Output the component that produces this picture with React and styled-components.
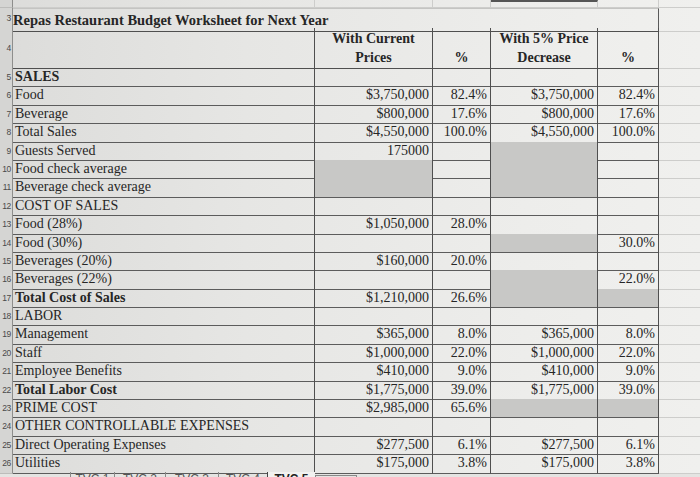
import React from 'react';
import styled, { createGlobalStyle } from 'styled-components';

const GlobalStyle = createGlobalStyle`
  html, body {
    margin: 0;
    padding: 0;
    overflow: hidden;
    background: linear-gradient(to right, #dcdcda 0%, #e6e6e4 35%, #ededeb 75%, #f0f0ee 100%);
    font-family: "Liberation Serif", "Times New Roman", serif;
    color: #262626;
  }
`;

const COLS = '13px 302px 118px 58px 107px 61px 60px 60px';

const Sheet = styled.div`
  width: 720px;
`;

const Row = styled.div`
  display: grid;
  grid-template-columns: ${COLS};
  height: ${(p) => p.$h}px;
  font-size: 14px;
  line-height: ${(p) => p.$h}px;
`;

const RowNum = styled.div`
  background: #d5d5d3;
  border-right: 1px solid #8e8e8c;
  border-bottom: 1px solid #bcbcba;
  font-family: "Liberation Sans", Arial, sans-serif;
  font-size: 8.5px;
  letter-spacing: -0.3px;
  color: #4a4a4a;
  text-align: right;
  padding-right: 1px;
  white-space: nowrap;
`;

const Cell = styled.div`
  border-right: 1px solid ${(p) => (p.$light ? '#cdcdcb' : '#4f4f4f')};
  border-bottom: 1px solid ${(p) => (p.$light ? '#cdcdcb' : '#5c5c5c')};
  border-top: ${(p) => (p.$topMark ? '2px solid #555' : 'none')};
  background: ${(p) => (p.$fill ? '#c8c8c6' : 'transparent')};
  text-align: ${(p) => p.$align || 'left'};
  font-weight: ${(p) => (p.$bold ? 700 : 400)};
  padding: 0 3px 0 2px;
  white-space: nowrap;
  box-sizing: border-box;
`;

const TitleCell = styled.div`
  grid-column: 2 / 7;
  border-right: 1px solid #5a5a5a;
  border-bottom: 1px solid #4f4f4f;
  border-top: 1px solid #c4c4c2;
  font-size: 14.5px;
  font-weight: 700;
  line-height: 22px;
  white-space: nowrap;
`;

const HeadCell = styled.div`
  border-right: 1px solid #4f4f4f;
  border-bottom: 1px solid #4f4f4f;
  display: flex;
  flex-direction: column;
  justify-content: flex-end;
  align-items: center;
  font-weight: 700;
  font-size: 14px;
  line-height: 19px;
  padding-bottom: 1px;
  text-align: center;
`;

const TabBar = styled.div`
  display: flex;
  height: 14px;
  padding-left: 70px;
  background: #e4e4e2;
  border-top: 1px solid #b5b5b3;
  font-family: "Liberation Sans", Arial, sans-serif;
  font-size: 12px;
  line-height: 14px;
  color: #555;
`;

const Tab = styled.div`
  width: ${(p) => p.$w}px;
  border-left: 1px solid ${(p) => (p.$active ? '#444' : '#8a8a88')};
  text-align: center;
  margin-top: -2px;
  font-weight: ${(p) => (p.$active ? 700 : 400)};
  color: ${(p) => (p.$active ? '#222' : '#555')};
  background: ${(p) => (p.$active ? '#f2f2f0' : 'transparent')};
`;

const AddBox = styled.div`
  width: 40px;
  border: 1px solid #888;
  border-bottom: none;
  margin-top: 1px;
`;

const G = 'gray';

const rows = [
  { n: 5, label: 'SALES', bold: true, vals: ['', '', '', ''] },
  { n: 6, label: 'Food', vals: ['$3,750,000', '82.4%', '$3,750,000', '82.4%'] },
  { n: 7, label: 'Beverage', vals: ['$800,000', '17.6%', '$800,000', '17.6%'] },
  { n: 8, label: 'Total Sales', vals: ['$4,550,000', '100.0%', '$4,550,000', '100.0%'] },
  { n: 9, label: 'Guests Served', vals: ['175000', '', G, ''] },
  { n: 10, label: 'Food check average', vals: [G, '', G, ''] },
  { n: 11, label: 'Beverage check average', vals: [G, '', G, ''] },
  { n: 12, label: 'COST OF SALES', vals: ['', '', '', ''] },
  { n: 13, label: 'Food (28%)', vals: ['$1,050,000', '28.0%', '', ''] },
  { n: 14, label: 'Food (30%)', vals: ['', '', G, '30.0%'] },
  { n: 15, label: 'Beverages (20%)', vals: ['$160,000', '20.0%', '', ''] },
  { n: 16, label: 'Beverages (22%)', vals: ['', '', G, '22.0%'] },
  { n: 17, label: 'Total Cost of Sales', bold: true, vals: ['$1,210,000', '26.6%', G, G] },
  { n: 18, label: 'LABOR', vals: ['', '', '', ''] },
  { n: 19, label: 'Management', vals: ['$365,000', '8.0%', '$365,000', '8.0%'] },
  { n: 20, label: 'Staff', vals: ['$1,000,000', '22.0%', '$1,000,000', '22.0%'] },
  { n: 21, label: 'Employee Benefits', vals: ['$410,000', '9.0%', '$410,000', '9.0%'] },
  { n: 22, label: 'Total Labor Cost', bold: true, vals: ['$1,775,000', '39.0%', '$1,775,000', '39.0%'] },
  { n: 23, label: 'PRIME COST', vals: ['$2,985,000', '65.6%', G, G] },
  { n: 24, label: 'OTHER CONTROLLABLE EXPENSES', vals: ['', '', '', ''] },
  { n: 25, label: 'Direct Operating Expenses', vals: ['$277,500', '6.1%', '$277,500', '6.1%'] },
  { n: 26, label: 'Utilities', vals: ['$175,000', '3.8%', '$175,000', '3.8%'] },
];

const tabs = [
  { name: 'TVC 1', w: 43 },
  { name: 'TVC 2', w: 50 },
  { name: 'TVC 3', w: 52 },
  { name: 'TVC 4', w: 48 },
  { name: 'TVC 5', w: 47, active: true },
];

const App = () => {
  return (
    <>
      <GlobalStyle />
      <Sheet>
        <Row $h={8}>
          <RowNum />
          <Cell $light />
          <Cell $light />
          <Cell $light />
          <Cell $light $topMark />
          <Cell $light />
          <Cell $light />
          <Cell $light />
        </Row>

        <Row $h={20}>
          <RowNum>3</RowNum>
          <TitleCell>Repas Restaurant Budget Worksheet for Next Year</TitleCell>
          <Cell $light />
          <Cell $light />
        </Row>

        <Row $h={40}>
          <RowNum>4</RowNum>
          <HeadCell />
          <HeadCell>
            <span>With Current</span>
            <span>Prices</span>
          </HeadCell>
          <HeadCell>%</HeadCell>
          <HeadCell>
            <span>With 5% Price</span>
            <span>Decrease</span>
          </HeadCell>
          <HeadCell>%</HeadCell>
          <Cell $light />
          <Cell $light />
        </Row>

        {rows.map((r) => (
          <Row key={r.n} $h={18.4}>
            <RowNum>{r.n}</RowNum>
            <Cell $bold={r.bold}>{r.label}</Cell>
            {r.vals.map((v, i) => (
              <Cell key={i} $align="right" $fill={v === G}>
                {v === G ? '' : v}
              </Cell>
            ))}
            <Cell $light />
            <Cell $light />
          </Row>
        ))}
      </Sheet>

      <TabBar>
        {tabs.map((t) => (
          <Tab key={t.name} $w={t.w} $active={t.active}>
            {t.name}
          </Tab>
        ))}
        <AddBox />
      </TabBar>
    </>
  );
};

export default App;
